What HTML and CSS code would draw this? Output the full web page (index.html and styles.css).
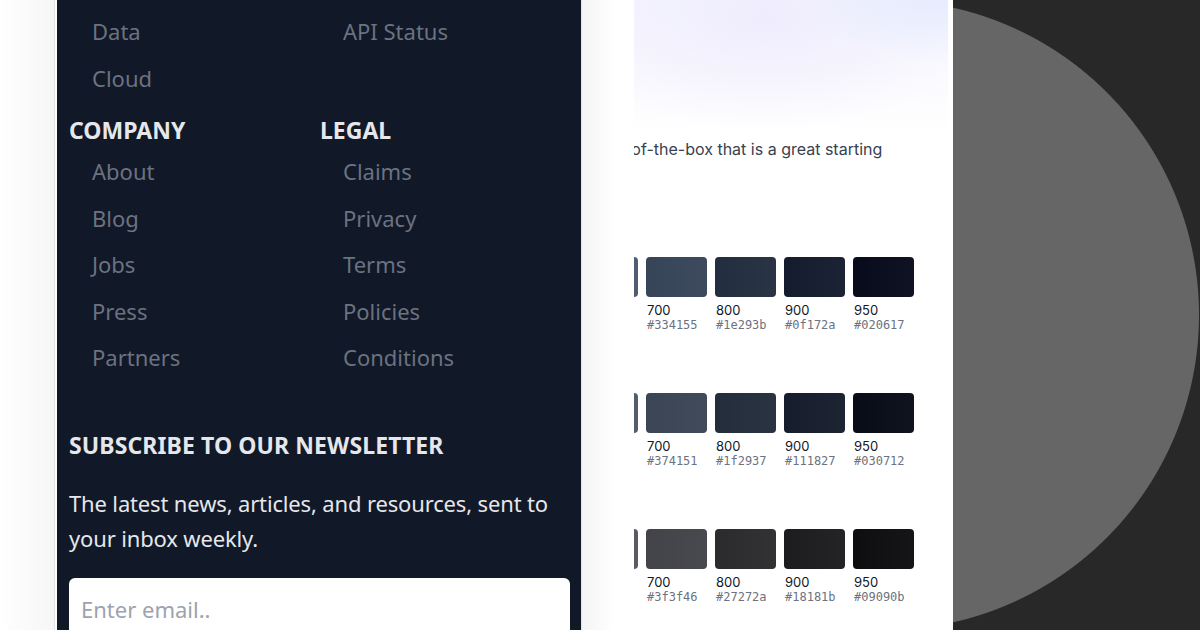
FILE: index.html
```html
<!DOCTYPE html>
<html lang="en">
<head>
    <meta charset="UTF-8">
    <meta name="viewport" content="width=device-width, initial-scale=1.0">
    <title>Footer and Palette Preview</title>
    <link rel="stylesheet" href="styles.css">
</head>
<body>
    <div class="stage">
        <div class="gutter"></div>

        <!-- Mobile footer -->
        <footer class="site-footer">
            <div class="link-grid">
                <div class="link-group">
                    <ul>
                        <li><a href="#">Data</a></li>
                        <li><a href="#">Cloud</a></li>
                    </ul>
                </div>
                <div class="link-group">
                    <ul>
                        <li><a href="#">API Status</a></li>
                    </ul>
                </div>
                <div class="link-group">
                    <h3>Company</h3>
                    <ul>
                        <li><a href="#">About</a></li>
                        <li><a href="#">Blog</a></li>
                        <li><a href="#">Jobs</a></li>
                        <li><a href="#">Press</a></li>
                        <li><a href="#">Partners</a></li>
                    </ul>
                </div>
                <div class="link-group">
                    <h3>Legal</h3>
                    <ul>
                        <li><a href="#">Claims</a></li>
                        <li><a href="#">Privacy</a></li>
                        <li><a href="#">Terms</a></li>
                        <li><a href="#">Policies</a></li>
                        <li><a href="#">Conditions</a></li>
                    </ul>
                </div>
            </div>

            <div class="newsletter">
                <h3>Subscribe to our newsletter</h3>
                <p>The latest news, articles, and resources, sent to your inbox weekly.</p>
                <input type="email" class="email-input" placeholder="Enter email..">
            </div>
        </footer>

        <div class="divider"></div>

        <!-- Palette preview -->
        <section class="preview">
            <p class="intro">out-of-the-box that is a great starting</p>

            <div class="palette">
                <div class="swatch"><span class="chip" style="background-color:#475569"></span><b>600</b><code>#475569</code></div>
                <div class="swatch"><span class="chip" style="background-color:#334155"></span><b>700</b><code>#334155</code></div>
                <div class="swatch"><span class="chip" style="background-color:#1e293b"></span><b>800</b><code>#1e293b</code></div>
                <div class="swatch"><span class="chip" style="background-color:#0f172a"></span><b>900</b><code>#0f172a</code></div>
                <div class="swatch"><span class="chip" style="background-color:#020617"></span><b>950</b><code>#020617</code></div>
            </div>

            <div class="palette">
                <div class="swatch"><span class="chip" style="background-color:#4b5563"></span><b>600</b><code>#4b5563</code></div>
                <div class="swatch"><span class="chip" style="background-color:#374151"></span><b>700</b><code>#374151</code></div>
                <div class="swatch"><span class="chip" style="background-color:#1f2937"></span><b>800</b><code>#1f2937</code></div>
                <div class="swatch"><span class="chip" style="background-color:#111827"></span><b>900</b><code>#111827</code></div>
                <div class="swatch"><span class="chip" style="background-color:#030712"></span><b>950</b><code>#030712</code></div>
            </div>

            <div class="palette">
                <div class="swatch"><span class="chip" style="background-color:#52525b"></span><b>600</b><code>#52525b</code></div>
                <div class="swatch"><span class="chip" style="background-color:#3f3f46"></span><b>700</b><code>#3f3f46</code></div>
                <div class="swatch"><span class="chip" style="background-color:#27272a"></span><b>800</b><code>#27272a</code></div>
                <div class="swatch"><span class="chip" style="background-color:#18181b"></span><b>900</b><code>#18181b</code></div>
                <div class="swatch"><span class="chip" style="background-color:#09090b"></span><b>950</b><code>#09090b</code></div>
            </div>
        </section>
    </div>

    <div class="backdrop"></div>
</body>
</html>
```

FILE: styles.css
```css
/* Page */
body {
    margin: 0;
    width: 1200px;
    height: 630px;
    overflow: hidden;
    display: flex;
    font-family: "Noto Sans", "Open Sans", sans-serif;
    background-color: #282828;
}

/* White stage holding both screens */
.stage {
    display: flex;
    width: 953px;
    flex-shrink: 0;
    height: 630px;
    background-color: #ffffff;
}

.gutter {
    width: 54px;
    flex-shrink: 0;
    background: linear-gradient(to right, #ffffff, #f6f6f6);
    border-right: 1px solid #e3e3e6;
    margin-right: 2px;
}

/* Dark footer */
.site-footer {
    width: 524px;
    flex-shrink: 0;
    box-sizing: border-box;
    padding: 8px 11px 0 12px;
    background-color: #111827;
    overflow: hidden;
}

.link-grid {
    display: grid;
    grid-template-columns: 251px 1fr;
}

.link-group h3,
.newsletter h3 {
    margin: 14px 0 0;
    font-size: 23px;
    line-height: 30px;
    font-weight: 700;
    text-transform: uppercase;
    color: #e5e7eb;
}

.link-group ul {
    list-style: none;
    margin: 3px 0 0;
    padding: 0 0 0 23px;
}

.link-group:nth-child(-n+2) ul {
    margin-top: 0;
}

.link-group li {
    line-height: 46.5px;
    font-size: 22px;
}

.link-group a {
    color: #6b7280;
    text-decoration: none;
}

/* Newsletter */
.newsletter h3 {
    margin-top: 49px;
    letter-spacing: 0.1px;
}

.newsletter p {
    margin: 26px 0 0;
    font-size: 22px;
    line-height: 35px;
    letter-spacing: -0.15px;
    color: #e5e7eb;
}

.email-input {
    display: block;
    width: 100%;
    height: 62px;
    margin-top: 22px;
    box-sizing: border-box;
    padding: 0 12px;
    border: none;
    border-radius: 6px;
    background-color: #ffffff;
    font-family: inherit;
    font-size: 22px;
    color: #111827;
}

.email-input::placeholder {
    color: #9ca3af;
}

.divider {
    width: 53px;
    flex-shrink: 0;
    border-left: 1px solid #e4e4e7;
    box-sizing: border-box;
    background: linear-gradient(to right, #f4f4f5, #ffffff 60%);
}

/* Palette preview (clipped on the left) */
.preview {
    width: 314px;
    flex-shrink: 0;
    overflow: hidden;
    background:
        radial-gradient(ellipse 130px 60px at 300px 0px, #e6ecfd, transparent),
        radial-gradient(ellipse 220px 110px at 130px 20px, #efedfd, transparent),
        linear-gradient(to bottom, #f5f4fe, #ffffff 135px);
}

.intro {
    margin: 139px 0 0 -34px;
    white-space: nowrap;
    font-family: "Inter", sans-serif;
    font-size: 16px;
    line-height: 20px;
    color: #374151;
}

.palette {
    display: flex;
    gap: 8px;
    margin-left: -57px;
    margin-top: 98px;
}

.palette + .palette {
    margin-top: 60px;
}

.swatch {
    display: flex;
    flex-direction: column;
    width: 61px;
    flex-shrink: 0;
}

.chip {
    height: 40px;
    border-radius: 4px;
    background-image: linear-gradient(to right, rgba(255, 255, 255, 0.02), rgba(255, 255, 255, 0.05));
}

.swatch b {
    margin-top: 6px;
    padding-left: 1px;
    font-family: "Inter", sans-serif;
    font-size: 13px;
    font-weight: 400;
    line-height: 15px;
    color: #111827;
}

.swatch code {
    padding-left: 1px;
    font-family: "DejaVu Sans Mono", monospace;
    font-size: 12px;
    line-height: 15px;
    color: #6b7280;
}

/* Dark backdrop with grey disc */
.backdrop {
    flex: 1;
    height: 630px;
    background: radial-gradient(circle at -69px 315px, #666666 314.5px, #282828 315.5px);
}
```
